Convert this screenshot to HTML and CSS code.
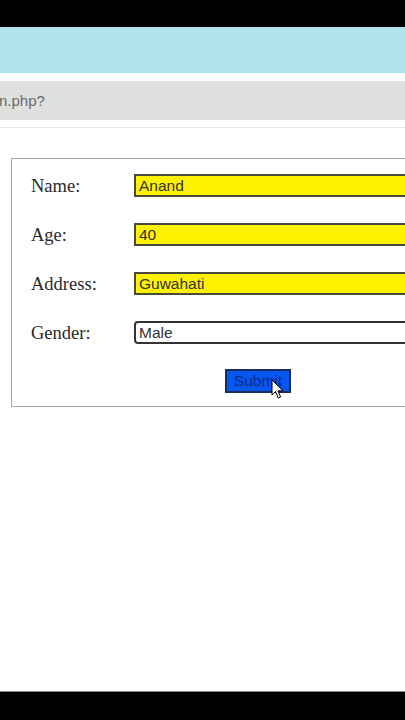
FILE: index.html
```html
<!DOCTYPE html>
<html>
<head>
<meta charset="utf-8">
<link rel="stylesheet" href="styles.css">
</head>
<body>
<div class="screen">
  <div class="topbar"></div>
  <div class="tabbar"></div>
  <div class="gap"></div>
  <div class="urlbar"><span class="url">n.php?</span></div>
  <div class="sep"></div>
  <main class="content">
    <form class="formbox">
      <div class="row">
        <label class="lbl">Name:</label>
        <input class="field" type="text" value="Anand">
      </div>
      <div class="row">
        <label class="lbl">Age:</label>
        <input class="field" type="text" value="40">
      </div>
      <div class="row">
        <label class="lbl">Address:</label>
        <input class="field" type="text" value="Guwahati">
      </div>
      <div class="row">
        <label class="lbl">Gender:</label>
        <div class="select">Male</div>
      </div>
      <div class="btnrow">
        <div class="btnwrap">
          <button class="submit" type="button">Submit</button>
          <svg class="cursor" width="14" height="21" viewBox="0 0 14 21">
            <path d="M1 1 L1 16 L4.5 12.6 L7.2 19 L9.6 18 L7 11.8 L12 11.8 Z" fill="#fff" stroke="#000" stroke-width="1" stroke-linejoin="round"/>
          </svg>
        </div>
      </div>
    </form>
  </main>
  <div class="bottombar"></div>
</div>
</body>
</html>
```
FILE: styles.css
```css
html, body {
  margin: 0;
  padding: 0;
  background: #000;
}
.screen {
  width: 405px;
  height: 720px;
  display: flex;
  flex-direction: column;
  overflow: hidden;
  background: #fff;
}
.topbar {
  height: 27px;
  background: #000;
  flex: none;
}
.tabbar {
  height: 46px;
  background: #afe4ef;
  flex: none;
}
.gap {
  height: 8px;
  background: #fbfdfd;
  flex: none;
}
.urlbar {
  height: 39px;
  background: #e0e0e0;
  flex: none;
  display: flex;
  align-items: center;
}
.url {
  font-family: "Liberation Sans", Arial, sans-serif;
  font-size: 15px;
  color: #6a6a6a;
  margin-left: -1px;
}
.sep {
  height: 7px;
  border-bottom: 1px solid #e6e6e6;
  background: #fff;
  flex: none;
}
.content {
  flex: 1;
  background: #fff;
  padding: 30px 0 0 11px;
  border-bottom: 1px solid #8a8a8a;
}
.formbox {
  width: 440px;
  border: 1px solid #a5a5a5;
  padding: 15px 0 13px 19px;
  display: flex;
  flex-direction: column;
  gap: 26px;
  margin: 0;
}
.row {
  display: flex;
  align-items: center;
  height: 23px;
}
.lbl {
  width: 103px;
  font-family: "Liberation Serif", "Times New Roman", serif;
  font-size: 18.5px;
  color: #2a2a2a;
  flex: none;
  position: relative;
  top: 1px;
}
.field {
  box-sizing: border-box;
  width: 320px;
  height: 23px;
  margin: 0;
  padding: 0 3px;
  border: 2px solid #4a4a3a;
  background: #fff200;
  font-family: "Liberation Sans", Arial, sans-serif;
  font-size: 15.5px;
  color: #333;
  outline: none;
}
.select {
  box-sizing: border-box;
  width: 320px;
  height: 23px;
  padding: 0 3px;
  border: 2px solid #333;
  border-radius: 4px;
  background: #fff;
  font-family: "Liberation Sans", Arial, sans-serif;
  font-size: 15.5px;
  line-height: 19px;
  color: #333;
}
.btnrow {
  display: flex;
  padding-left: 194px;
  margin-top: -1px;
}
.btnwrap {
  position: relative;
}
.submit {
  box-sizing: border-box;
  width: 66px;
  height: 24px;
  margin: 0;
  padding: 0;
  background: #0557f0;
  border: 2px solid #1c2c5c;
  font-family: "Liberation Sans", Arial, sans-serif;
  font-size: 15.5px;
  color: #0b2a86;
  display: block;
}
.cursor {
  position: absolute;
  left: 46px;
  top: 10px;
}
.bottombar {
  height: 28px;
  background: #000;
  flex: none;
}
```
